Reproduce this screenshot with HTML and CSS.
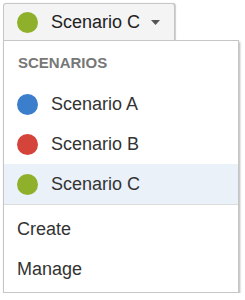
FILE: index.html
```html
<!DOCTYPE html>
<html lang="en">
<head>
<meta charset="UTF-8">
<title>Scenario picker</title>
<link rel="stylesheet" href="styles.css">
</head>
<body>
    <div class="picker">
        <!-- Toggle button -->
        <div class="picker-btn">
            <span class="dot dot-green"></span>
            <span class="picker-label">Scenario C</span>
            <svg class="caret" width="9" height="5" viewBox="0 0 9 5"><polygon points="0,0 9,0 4.5,5" fill="#555"/></svg>
        </div>

        <!-- Dropdown menu -->
        <div class="menu">
            <div class="menu-header">SCENARIOS</div>
            <div class="menu-item"><span class="dot dot-blue"></span>Scenario A</div>
            <div class="menu-item"><span class="dot dot-red"></span>Scenario B</div>
            <div class="menu-item active"><span class="dot dot-green"></span>Scenario C</div>
            <div class="menu-actions">
                <div class="menu-item">Create</div>
                <div class="menu-item">Manage</div>
            </div>
        </div>
    </div>
</body>
</html>
```

FILE: styles.css
```css
body {
    margin: 0;
    padding: 3px 0 0 3px;
    background-color: #fff;
    font-family: "Liberation Sans", Arial, sans-serif;
}

.picker {
    width: 236px;
}

/* Button */
.picker-btn {
    display: flex;
    align-items: center;
    box-sizing: border-box;
    width: 172px;
    height: 37px;
    padding-left: 13px;
    background-color: #f4f4f4;
    border: 1px solid #c6c6c6;
    border-bottom: none;
    border-radius: 3px 3px 0 0;
    box-shadow: 1px 0 1px rgba(0, 0, 0, 0.2);
}

.picker-label {
    margin-left: 13px;
    font-size: 18px;
    color: #222;
}

.caret {
    margin-left: 11px;
}

.dot {
    display: inline-block;
    width: 21px;
    height: 21px;
    border-radius: 50%;
    flex-shrink: 0;
}

.dot-blue { background-color: #3b7fcc; }
.dot-red { background-color: #d4443a; }
.dot-green { background-color: #8fb02a; }

/* Menu */
.menu {
    box-sizing: border-box;
    width: 236px;
    background-color: #fff;
    border: 1px solid #c6c6c6;
    box-shadow: 1px 2px 2px rgba(0, 0, 0, 0.3);
}

.menu-header {
    padding: 12px 0 11px 14px;
    line-height: 20px;
    font-size: 15px;
    font-weight: bold;
    color: #777;
}

.menu-item {
    display: flex;
    align-items: center;
    height: 40px;
    padding-left: 13px;
    font-size: 18px;
    color: #333;
}

.menu-item .dot {
    margin-right: 13px;
}

.menu-item.active {
    background-color: #eaf1f9;
}

.menu-actions {
    border-top: 1px solid #dcdcdc;
    padding: 4px 0 3px;
}
```
